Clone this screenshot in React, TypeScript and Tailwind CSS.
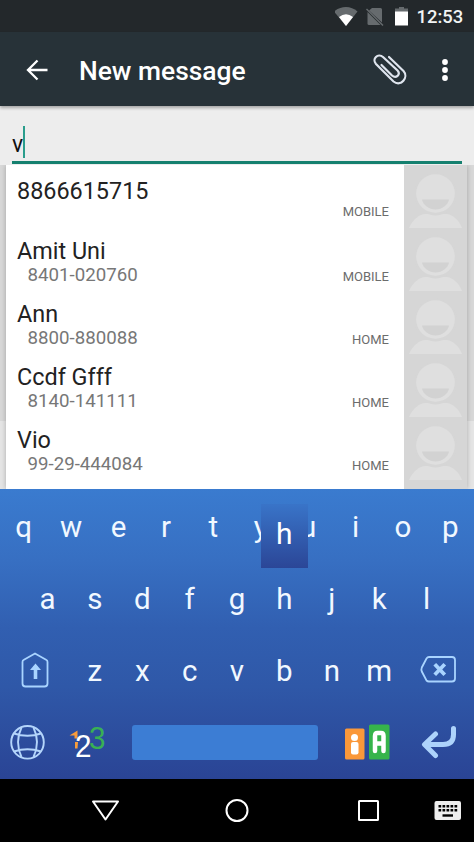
import React from 'react';

interface Contact {
    name: string;
    phone?: string;
    type: string;
}

const contacts: Contact[] = [
    { name: '8866615715', type: 'MOBILE' },
    { name: 'Amit Uni', phone: '8401-020760', type: 'MOBILE' },
    { name: 'Ann', phone: '8800-880088', type: 'HOME' },
    { name: 'Ccdf Gfff', phone: '8140-141111', type: 'HOME' },
    { name: 'Vio', phone: '99-29-444084', type: 'HOME' },
];

const StatusBar: React.FC = () => (
    <div className="flex h-8 shrink-0 items-center justify-end bg-[#23282b] pr-[11px]">
        <svg width="82" height="32" viewBox="0 0 82 32">
            <path d="M-1 11.5C6 5.500 16 5.500 22.500 11.500L11 26Z" fill="#666b6e" />
            <path d="M4 17Q11 11.500 18 17L11 26Z" fill="#fff" />
            <path d="M34 10.500L37 8H45.500Q47 8 47 9.500V22.500Z" fill="#666b6e" />
            <path d="M32.500 12L45.500 25H34Q32.500 25 32.500 23.500Z" fill="#666b6e" />
            <path d="M31.500 9L48 25.500" stroke="#666b6e" strokeWidth="1.500" />
            <path d="M60 8.500H64V7H69V8.500H73V12H60Z" fill="#666b6e" />
            <path d="M60 11.500H73V25.500H60Z" fill="#fff" />
        </svg>
        <span className="mt-[3px] w-[46.500px] text-[18.400px] font-medium leading-none text-[#f2f4f4]">12:53</span>
    </div>
);

const Toolbar: React.FC = () => (
    <div className="relative z-10 flex h-[74px] shrink-0 items-center bg-[#273238] shadow-[0_2px_3px_rgba(0,0,0,0.3)]">
        <svg className="ml-[25px]" width="24" height="24" viewBox="0 0 24 24" fill="none" stroke="#fff" strokeWidth="2.300">
            <path d="M22.500 13H3M12.500 3.500L3 13L12.500 22.500" />
        </svg>
        <h1 className="ml-[30px] mt-[5px] flex-1 whitespace-nowrap text-[26.400px] font-medium leading-none text-white">New message</h1>
        <svg className="mr-[33px]" width="36" height="34" viewBox="0 0 36 34" fill="none" stroke="#dfe5ee" strokeWidth="2.200" strokeLinecap="round">
            <path d="M17 5L31.500 19C37 25 29 35.500 21.500 29.500L4 12C-0.500 7 6 0.500 11 5L25.500 18.500C29 22.500 24 27 20 23.500L9.500 13" />
        </svg>
        <svg className="mr-[25px]" width="8" height="24" viewBox="0 0 8 24" fill="#fff">
            <circle cx="4" cy="5" r="2.900" />
            <circle cx="4" cy="13" r="2.900" />
            <circle cx="4" cy="21" r="2.900" />
        </svg>
    </div>
);

const RecipientField: React.FC = () => (
    <div className="h-[59px] shrink-0 px-3 pt-5">
        <div className="flex h-[38px] items-start border-b-[3px] border-[#15806f]">
            <span className="w-[10.500px] pt-[5px] text-[23px] leading-[28px] text-[#111]">v</span>
            <span className="h-8 w-[2px] bg-[#2a9d8c]" />
        </div>
    </div>
);

const Avatar: React.FC = () => (
    <svg className="block h-[63.100px] w-[63px] bg-[#d6d6d6]" viewBox="0 0 63 63.100">
        <path d="M5 63C9 54 16 49 21 49H43C49 50 55 55 58 63Z" fill="#dfdfdf" />
        <circle cx="31.500" cy="29" r="21.500" fill="#d6d6d6" />
        <circle cx="31.500" cy="28.500" r="19.300" fill="#dfdfdf" />
        <path d="M18 34.500H45C44 40 38 44.500 31.500 44.500S19 40 18 34.500Z" fill="#d2d2d2" />
    </svg>
);

const ContactRow: React.FC<{ contact: Contact }> = ({ contact }) => (
    <div className="flex h-[63.100px] shrink-0">
        <div className={contact.phone ? 'flex flex-1 flex-col pl-[11px] pt-[11px]' : 'flex flex-1 flex-col pl-[11px] pt-[14px]'}>
            <span className="text-[23.400px] leading-6 text-[#222]">{contact.name}</span>
            {contact.phone && <span className="pl-[10.500px] text-[18.700px] leading-6 text-[#777]">{contact.phone}</span>}
        </div>
        <span className={contact.phone ? 'mr-[15px] mt-[40.500px] text-[13px] leading-4 text-[#6c6c6c]' : 'mr-[15px] mt-[39px] text-[13px] leading-4 text-[#6c6c6c]'}>
            {contact.type}
        </span>
        <Avatar />
    </div>
);

const Suggestions: React.FC = () => (
    <div className="h-[324px] shrink-0 overflow-hidden bg-[linear-gradient(#d8d8d8_256px,#e5e5e5_256px)] pl-[6px] pr-[7px]">
        <div className="flex h-full flex-col bg-[linear-gradient(90deg,white_398px,#d6d6d6_398px)] shadow-[0_0_5px_rgba(0,0,0,0.25)]">
            {contacts.map((contact) => (
                <ContactRow key={contact.name} contact={contact} />
            ))}
        </div>
    </div>
);

const KeyRow: React.FC<{ keys: string }> = ({ keys }) => (
    <>
        {keys.split('').map((key) => (
            <span key={key} className="w-[47.400px] text-center text-[29.500px] leading-[72.500px] text-[#f1f8ff]">
                {key}
            </span>
        ))}
    </>
);

const Keyboard: React.FC = () => (
    <div className="relative h-[290px] shrink-0 bg-[linear-gradient(#3a7bcf_0%,#376fc2_25%,#315fb1_48%,#2f58a8_68%,#2a4495_100%)]">
        <div className="flex h-[72.500px] justify-center pt-[2px]">
            <KeyRow keys="qwertyuiop" />
        </div>
        <div className="flex h-[72px] justify-center pt-px">
            <KeyRow keys="asdfghjkl" />
        </div>
        <div className="flex h-[73px] items-center justify-center pt-[2px]">
            <svg className="w-[71px]" width="71" height="50" viewBox="0 0 71 50" fill="none" stroke="#a9d4ff" strokeWidth="1.800">
                <path d="M23.500 14L35 7.500L46.500 14Q47.500 14.500 47.500 16V37.500Q47.500 40.500 44.500 40.500H25.500Q22.500 40.500 22.500 37.500V16Q22.500 14.500 23.500 14Z" />
                <path d="M35.500 33V20" strokeWidth="3.600" />
                <path d="M30 24L35.500 17.500L41 24Z" fill="#a9d4ff" stroke="none" />
            </svg>
            <KeyRow keys="zxcvbnm" />
            <svg className="w-[71px]" width="71" height="50" viewBox="0 0 71 50" fill="none" stroke="#a9d4ff" strokeWidth="1.800">
                <path d="M26 11H49Q52 11 52 14V32.500Q52 35.500 49 35.500H26Q24.500 35.500 23.500 34.500L18.800 25.500Q18 23.500 18.800 21.500L23.500 12.500Q24.500 11 26 11Z" />
                <path d="M33 19.500L40.500 27.500M40.500 19.500L33 27.500" strokeWidth="3.700" strokeLinecap="square" />
            </svg>
        </div>
        <div className="flex h-[72px] items-center">
            <svg className="ml-[10px]" width="36" height="36" viewBox="0 0 36 36" fill="none" stroke="#b4d5fb" strokeWidth="1.900">
                <circle cx="17.500" cy="17.300" r="16.300" />
                <path d="M11.500 2.500Q4.500 17.300 11.500 32M23.500 2.500Q30.500 17.300 23.500 32M4 8.500Q17.500 13 31 8.500M4 26.500Q17.500 22 31 26.500" />
            </svg>
            <svg className="ml-[23px] overflow-visible" width="38" height="46" viewBox="0 -4 38 46" fontFamily='"Liberation Sans", Arial, sans-serif'>
                <path d="M0.500 11.500L8.500 6.500V14.500H5.500V11.500Z" fill="#f99c3b" />
                <path d="M6 18H9L8.500 24.500H6Z" fill="#f99c3b" />
                <text x="20" y="25" fontSize="31" fill="#39b054" textLength="16.500" lengthAdjust="spacingAndGlyphs">3</text>
                <text x="6" y="33" fontSize="31" fill="#fff" textLength="16.500" lengthAdjust="spacingAndGlyphs">2</text>
            </svg>
            <div className="ml-[25px] h-[35px] w-[186px] rounded-[3px] bg-[#3c7dd4]" />
            <svg className="ml-[26px]" width="46" height="38" viewBox="0 0 46 38" fill="none">
                <rect x="1" y="4.500" width="19.500" height="31" rx="1.500" fill="#fa983a" />
                <circle cx="10.500" cy="13.500" r="3.500" fill="#fff" />
                <rect x="7" y="18" width="7.500" height="12.500" rx="2" fill="#fff" />
                <rect x="25" y="0.500" width="20.500" height="35" rx="1.500" fill="#36b44b" />
                <path d="M31 27V12Q31 9 33.500 9H37Q39.500 9 39.500 12V27M31 19.500H39.500" stroke="#fff" strokeWidth="4.500" strokeLinecap="round" />
            </svg>
            <svg className="ml-[30.500px]" width="36" height="36" viewBox="0 0 36 36" fill="none" stroke="#add3fb" strokeWidth="5" strokeLinecap="round" strokeLinejoin="round">
                <path d="M32.500 3.500V9.500Q32.500 19.500 22 19.500H5M14.500 9L3.500 19.500L14.500 30.500" />
            </svg>
        </div>
        {/* preview of the pressed key */}
        <div className="absolute left-[260.500px] top-[15px] h-[64px] w-[47.500px] bg-[linear-gradient(#3974c8,#2b4697)] text-center text-[30px] leading-[60px] text-white">
            h
        </div>
    </div>
);

const NavigationBar: React.FC = () => (
    <div className="flex h-[63px] shrink-0 items-center bg-black">
        <svg className="ml-[91px]" width="28" height="24" viewBox="0 0 28 24" fill="none" stroke="#fff" strokeWidth="2" strokeLinejoin="round">
            <path d="M2 2.500H27L14.500 20.500Z" />
        </svg>
        <svg className="ml-[106px]" width="24" height="24" viewBox="0 0 24 24" fill="none" stroke="#fff" strokeWidth="2">
            <circle cx="12" cy="11.500" r="10.500" />
        </svg>
        <svg className="ml-[108px]" width="24" height="24" viewBox="0 0 24 24" fill="none" stroke="#fff" strokeWidth="2">
            <rect x="2" y="2" width="19" height="19" rx="0.500" />
        </svg>
        <svg className="ml-[53px]" width="28" height="20" viewBox="0 0 28 20">
            <rect x="0.500" y="0" width="26.500" height="19" rx="2" fill="#eee" />
            <path d="M4.500 5.300H23.500M4.500 9.300H23.500" stroke="#000" strokeWidth="2.500" strokeDasharray="2.700 1.300" />
            <path d="M8.500 14.500H19" stroke="#000" strokeWidth="2.400" />
        </svg>
    </div>
);

const App: React.FC = () => (
    <div className="flex h-[842px] w-[474px] flex-col overflow-hidden bg-[#ededed] font-[Roboto,sans-serif]">
        <StatusBar />
        <Toolbar />
        <RecipientField />
        <Suggestions />
        <Keyboard />
        <NavigationBar />
    </div>
);

export default App;
